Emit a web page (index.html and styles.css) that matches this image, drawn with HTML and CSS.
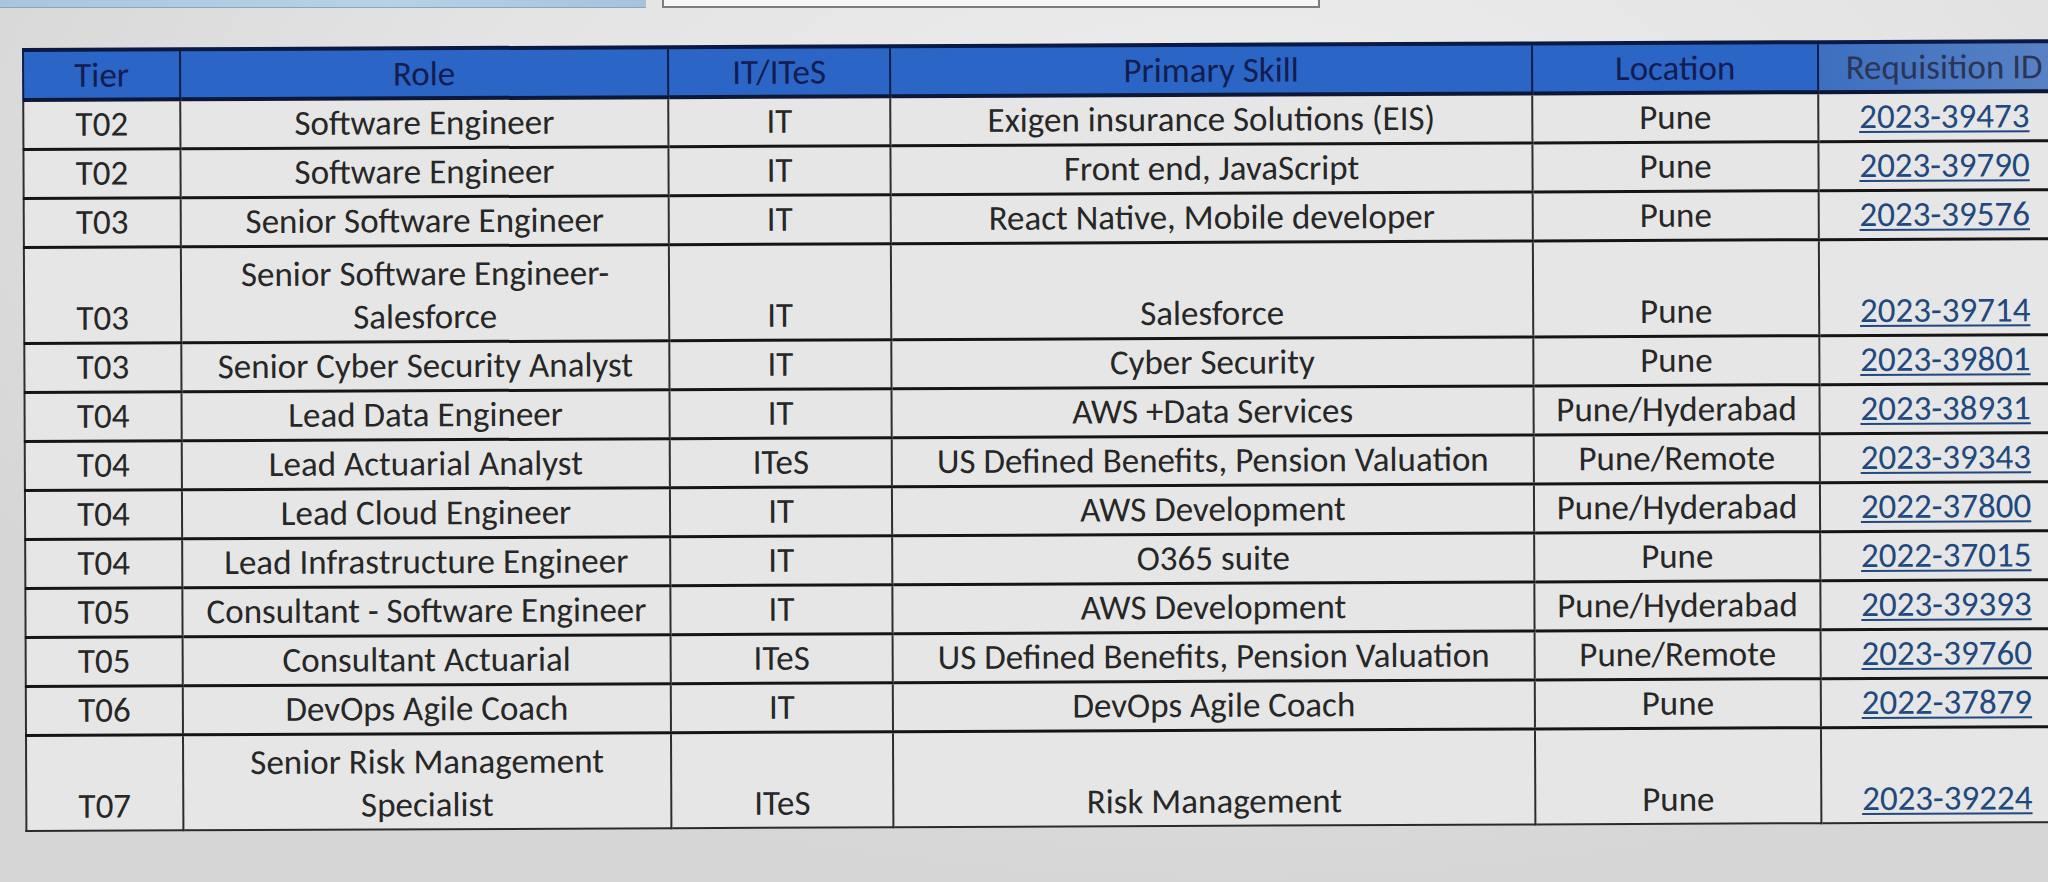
FILE: index.html
```html
<!DOCTYPE html>
<html lang="en">
<head>
<meta charset="utf-8">
<title>Open Positions</title>
<link rel="stylesheet" href="styles.css">
</head>
<body>
<div class="screen">
  <div class="toolbar">
    <div class="tab-strip"></div>
    <div class="input-box"></div>
  </div>
  <div class="sheet">
    <table class="grid">
      <colgroup>
        <col class="c-tier"><col class="c-role"><col class="c-it"><col class="c-skill"><col class="c-loc"><col class="c-req">
      </colgroup>
      <thead>
        <tr class="head">
          <th>Tier</th><th>Role</th><th>IT/ITeS</th><th>Primary Skill</th><th>Location</th><th>Requisition ID</th>
        </tr>
      </thead>
      <tbody>
        <tr><td>T02</td><td>Software Engineer</td><td>IT</td><td>Exigen insurance Solutions (EIS)</td><td>Pune</td><td><a>2023-39473</a></td></tr>
        <tr><td>T02</td><td>Software Engineer</td><td>IT</td><td>Front end, JavaScript</td><td>Pune</td><td><a>2023-39790</a></td></tr>
        <tr><td>T03</td><td>Senior Software Engineer</td><td>IT</td><td>React Native, Mobile developer</td><td>Pune</td><td><a>2023-39576</a></td></tr>
        <tr class="tall"><td>T03</td><td>Senior Software Engineer-<br>Salesforce</td><td>IT</td><td>Salesforce</td><td>Pune</td><td><a>2023-39714</a></td></tr>
        <tr><td>T03</td><td>Senior Cyber Security Analyst</td><td>IT</td><td>Cyber Security</td><td>Pune</td><td><a>2023-39801</a></td></tr>
        <tr><td>T04</td><td>Lead Data Engineer</td><td>IT</td><td>AWS +Data Services</td><td>Pune/Hyderabad</td><td><a>2023-38931</a></td></tr>
        <tr><td>T04</td><td>Lead Actuarial Analyst</td><td>ITeS</td><td>US Defined Benefits, Pension Valuation</td><td>Pune/Remote</td><td><a>2023-39343</a></td></tr>
        <tr><td>T04</td><td>Lead Cloud Engineer</td><td>IT</td><td>AWS Development</td><td>Pune/Hyderabad</td><td><a>2022-37800</a></td></tr>
        <tr><td>T04</td><td>Lead Infrastructure Engineer</td><td>IT</td><td>O365 suite</td><td>Pune</td><td><a>2022-37015</a></td></tr>
        <tr><td>T05</td><td>Consultant - Software Engineer</td><td>IT</td><td>AWS Development</td><td>Pune/Hyderabad</td><td><a>2023-39393</a></td></tr>
        <tr><td>T05</td><td>Consultant Actuarial</td><td>ITeS</td><td>US Defined Benefits, Pension Valuation</td><td>Pune/Remote</td><td><a>2023-39760</a></td></tr>
        <tr><td>T06</td><td>DevOps Agile Coach</td><td>IT</td><td>DevOps Agile Coach</td><td>Pune</td><td><a>2022-37879</a></td></tr>
        <tr class="tall last"><td>T07</td><td>Senior Risk Management<br>Specialist</td><td>ITeS</td><td>Risk Management</td><td>Pune</td><td><a>2023-39224</a></td></tr>
      </tbody>
    </table>
  </div>
</div>
</body>
</html>
```
FILE: styles.css
```css
* { box-sizing: border-box; }

html, body {
  margin: 0;
  padding: 0;
  width: 2048px;
  height: 882px;
  overflow: hidden;
}

body {
  background: radial-gradient(ellipse 1400px 700px at 60% 20%, #ededed 0%, #e4e4e4 55%, #d6d6d6 100%);
  font-family: Carlito, "Open Sans", "Liberation Sans", sans-serif;
  font-stretch: 80%;
  color: #272727;
}

.screen {
  display: flex;
  flex-direction: column;
}

.toolbar {
  display: flex;
  gap: 16px;
  height: 8px;
}

.tab-strip {
  width: 646px;
  height: 8px;
  background: linear-gradient(90deg, #a9c6dd, #b7d2e6 60%, #a6c3dc);
  border-bottom: 1px solid #8aa6bd;
}

.input-box {
  width: 658px;
  height: 8px;
  background: #f6f6f6;
  border: 2px solid #7d7d7d;
  border-top: none;
}

.sheet {
  padding: 40px 0 0 22px;
}

.grid {
  border-collapse: collapse;
  table-layout: fixed;
  width: 2047px;
  transform: rotate(-0.25deg);
  transform-origin: 0 0;
  background: #e6e6e6;
}

.c-tier { width: 157px; }
.c-role { width: 488px; }
.c-it { width: 222px; }
.c-skill { width: 642px; }
.c-loc { width: 286px; }
.c-req { width: 252px; }

.grid th,
.grid td {
  text-align: center;
  vertical-align: bottom;
  white-space: nowrap;
  font-size: 35px;
  font-weight: 400;
  line-height: 43px;
  padding: 0 4px 2px;
  border-left: 2px solid #2e2e2e;
  border-right: 2px solid #2e2e2e;
  border-top: 3px solid #151515;
  border-bottom: 3px solid #151515;
}

.head th {
  height: 50px;
  background: #2b66c6;
  color: #131d52;
  border-top: 4px solid #0b1a44;
  border-left-color: #0e1d48;
  border-right-color: #0e1d48;
  border-bottom: 4px solid #0d1838;
  vertical-align: middle;
  padding: 0 4px;
}

.head th:last-child {
  background: linear-gradient(90deg, #3d6fc0, #5a83c4);
  color: #2a3558;
}

.grid tbody tr { height: 49px; }
.grid tbody tr.tall { height: 96px; }

.grid tbody tr.last td { border-bottom: 2px solid #2a2a2a; }

.grid td a {
  color: #22497e;
  text-decoration: underline;
  text-decoration-thickness: 2px;
  text-underline-offset: 3px;
}
```
